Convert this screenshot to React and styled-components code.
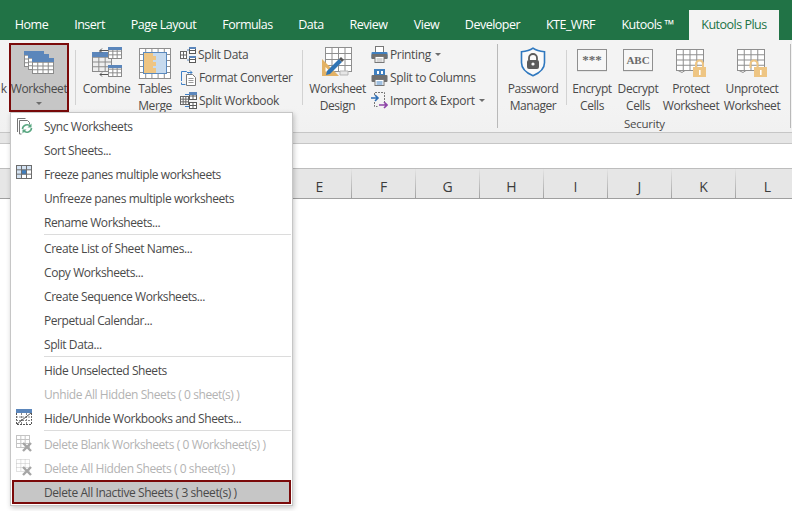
import React from "react";
import styled, { createGlobalStyle } from "styled-components";

const FONT = `"Open Sans", "Noto Sans", "Liberation Sans", sans-serif`;
const TEXT = "#4a4a4a";
const BLUE = "#5b86bb";
const LINE = "#8b8b8b";
const ORANGE = "#eec583";

const Global = createGlobalStyle`
  html, body { margin: 0; padding: 0; background: #fff; overflow: hidden; }
  #root { width: 792px; height: 511px; }
`;

const Page = styled.div`
  position: relative;
  width: 792px;
  height: 511px;
  overflow: hidden;
  background: #fff;
  font-family: ${FONT};
  color: ${TEXT};
`;

const TabBar = styled.div`
  display: flex;
  align-items: flex-end;
  height: 40px;
  background: #217346;
`;

const Tab = styled.div`
  width: ${(p) => p.$w}px;
  height: 30px;
  margin-left: ${(p) => (p.$active ? 4 : 0)}px;
  display: flex;
  align-items: center;
  justify-content: center;
  font-size: 12.5px;
  letter-spacing: -0.5px;
  white-space: nowrap;
  padding-bottom: 1px;
  box-sizing: border-box;
  color: ${(p) => (p.$active ? "#217346" : "#fff")};
  background: ${(p) => (p.$active ? "#f3f3f3" : "transparent")};
`;

const Ribbon = styled.div`
  display: flex;
  align-items: flex-start;
  height: 92px;
  overflow: hidden;
  background: linear-gradient(#f3f3f3 70%, #f1f1f1);
`;

const Clipped = styled.div`
  width: 9px;
  flex: none;
  height: 69px;
  margin-top: 3px;
  display: flex;
  justify-content: flex-end;
  padding-top: 38px;
  padding-right: 2px;
  box-sizing: border-box;
  font-size: 12px;
  line-height: 16.5px;
  white-space: nowrap;
`;

const Large = styled.div`
  flex: none;
  width: ${(p) => p.$w}px;
  height: 69px;
  margin-top: 3px;
  margin-left: ${(p) => p.$ml || 0}px;
  display: flex;
  flex-direction: column;
  align-items: center;
  box-sizing: border-box;
  position: relative;
  background: ${(p) => (p.$on ? "#c6c6c6" : "transparent")};
`;

const Mark = styled.div`
  position: absolute;
  inset: 0;
  border: 2px solid #7b0a0a;
`;

const IconSlot = styled.div`
  height: 38px;
  width: 100%;
  flex: none;
  display: flex;
  align-items: flex-start;
  justify-content: center;
  padding-top: ${(p) => p.$top || 3}px;
  box-sizing: border-box;
`;

const Label = styled.div`
  font-size: 12px;
  line-height: 16.5px;
  letter-spacing: -0.42px;
  text-align: center;
  white-space: nowrap;
`;

const Caret = styled.span`
  display: inline-block;
  width: 0;
  height: 0;
  border-left: 3px solid transparent;
  border-right: 3px solid transparent;
  border-top: 3px solid #6d6d6d;
`;

const CaretRow = styled.div`
  display: flex;
  justify-content: center;
  margin-top: 4px;
`;

const Sep = styled.div`
  flex: none;
  width: 1px;
  height: ${(p) => (p.$strong ? 84 : 55)}px;
  margin-top: ${(p) => (p.$strong ? 4 : 10)}px;
  margin-left: ${(p) => p.$ml || 0}px;
  background: ${(p) => (p.$strong ? "#b9b9b9" : "#d2d2d2")};
`;

const Stack = styled.div`
  flex: none;
  width: ${(p) => p.$w}px;
  margin-top: 3px;
  margin-left: ${(p) => p.$ml || 0}px;
  display: flex;
  flex-direction: column;
`;

const Small = styled.div`
  height: 23px;
  display: flex;
  align-items: center;
  gap: 2px;
  font-size: 12px;
  letter-spacing: -0.35px;
  white-space: nowrap;
  ${Caret} { margin-left: 2px; }
`;

const Group = styled.div`
  flex: none;
  margin-left: 2px;
  width: 214px;
`;

const GroupRow = styled.div`
  display: flex;
`;

const Caption = styled.div`
  font-size: 11.5px;
  line-height: 16px;
  letter-spacing: -0.25px;
  padding-left: 55px;
  margin-top: 4px;
`;

const Band = styled.div`
  height: 10px;
  background: #e6e6e6;
  border-top: 1px solid #c6c6c6;
  border-bottom: 1px solid #c6c6c6;
`;

const FormulaBar = styled.div`
  height: 24px;
  background: #fff;
`;

const Headers = styled.div`
  display: flex;
  height: 29px;
  background: #e6e6e6;
  border-top: 1px solid #bdbdbd;
  border-bottom: 1px solid #9f9f9f;
  overflow: hidden;
`;

const Corner = styled.div`
  flex: none;
  width: 288px;
`;

const Col = styled.div`
  flex: none;
  width: 64px;
  box-sizing: border-box;
  display: flex;
  align-items: flex-end;
  justify-content: center;
  padding-bottom: 1px;
  font-size: 14px;
  line-height: 20px;
  color: #3c3c3c;
  border-right: 1px solid;
  border-image: linear-gradient(#e6e6e6, #a0a0a0) 1;
`;

const Menu = styled.div`
  position: absolute;
  left: 10px;
  top: 112px;
  width: 283px;
  box-sizing: border-box;
  padding: 1px;
  background: #fff;
  border: 1px solid #c6c6c6;
  box-shadow: 1px 2px 5px rgba(0, 0, 0, 0.22);
`;

const Item = styled.div`
  height: 24px;
  display: flex;
  align-items: center;
  box-sizing: border-box;
  font-size: 12px;
  letter-spacing: -0.42px;
  white-space: nowrap;
  color: ${(p) => (p.$off ? "#b3b3b3" : TEXT)};
  background: ${(p) => (p.$picked ? "#c6c6c6" : "transparent")};
  border: ${(p) => (p.$picked ? "2px solid #7b0a0a" : "none")};
  padding-left: ${(p) => (p.$picked ? 30 : 32)}px;
  position: relative;
`;

const ItemIcon = styled.span`
  position: absolute;
  left: 4px;
  top: 3px;
  width: 18px;
  height: 18px;
  display: flex;
`;

const Divider = styled.div`
  height: 2px;
  margin-left: 32px;
  background: linear-gradient(#dcdcdc 50%, #fff 50%);
`;

// a little table: the shape nearly every Kutools icon is built from
const Grid = ({ x, y, w, h, cols = 3, rows = 3, head, fill = "#fff", line = LINE, dash, headH = 3 }) => {
  const parts = [];
  for (let i = 1; i < cols; i++) {
    const px = x + (w * i) / cols;
    parts.push(<line key={"c" + i} x1={px} y1={y} x2={px} y2={y + h} />);
  }
  for (let i = 1; i < rows; i++) {
    const py = y + (h * i) / rows;
    parts.push(<line key={"r" + i} x1={x} y1={py} x2={x + w} y2={py} />);
  }
  return (
    <g stroke={line} strokeWidth="1" strokeDasharray={dash} fill="none">
      <rect x={x} y={y} width={w} height={h} fill={fill} />
      {parts}
      {head && <rect x={x} y={y} width={w} height={headH} fill={head} stroke={head} />}
    </g>
  );
};

const Lock = ({ x, y, open }) => (
  <g>
    <path
      d={open ? `M${x + 1.5} ${y + 8}v-4a3.5 3.5 0 0 1 7 0v4` : `M${x + 3} ${y + 8}v-4a3.5 3.5 0 0 1 7 0v4`}
      fill="none"
      stroke={ORANGE}
      strokeWidth="2"
    />
    <rect x={open ? x + 5 : x} y={y + 7} width="13" height="10" fill={ORANGE} />
    <rect x={(open ? x + 5 : x) + 6} y={y + 10} width="1.6" height="5" fill="#fff" />
  </g>
);

const WorksheetIcon = () => (
  <svg width="30" height="24" viewBox="0 0 30 24">
    <Grid x={0.5} y={0.5} w={19} h={15} cols={4} rows={4} head={BLUE} />
    <Grid x={4.5} y={3.5} w={20} h={15} cols={4} rows={4} head={BLUE} />
    <Grid x={8.5} y={7.5} w={21} h={15} cols={4} rows={4} head={BLUE} />
  </svg>
);

const CombineIcon = () => (
  <svg width="30" height="31" viewBox="0 0 30 31">
    <Grid x={0.5} y={5.5} w={19} h={19} cols={3} rows={4} head={BLUE} headH={4} fill="#eeeeee" />
    <Grid x={16.5} y={0.5} w={13} h={11} cols={3} rows={3} head={BLUE} headH={2} />
    <Grid x={16.5} y={18.5} w={13} h={11} cols={3} rows={3} head={BLUE} headH={2} />
    <path d="M16 3.5H8M8 3.5v2M10 1.5l-2 2 2 2M16 27.5H8M10 25.5l-2 2 2 2" stroke="#555" fill="none" />
  </svg>
);

const MergeIcon = () => (
  <svg width="32" height="32" viewBox="0 0 32 32">
    <Grid x={0.5} y={0.5} w={31} h={30} cols={5} rows={5} line="#8f8f8f" />
    <rect x="4.5" y="4.5" width="23" height="21" fill="#c6daee" stroke="#5a8abf" />
    <path d="M5 5h9v3h3v4h-3v2h3v4h-3v2h3v5H5z" fill={ORANGE} />
  </svg>
);

const SplitDataIcon = () => (
  <svg width="16" height="16" viewBox="0 0 16 16">
    <Grid x={0.5} y={4.5} w={6} h={7} cols={2} rows={2} line="#666" />
    <Grid x={9.5} y={0.5} w={6} h={6} cols={1} rows={2} line="#5a5a5a" head={BLUE} headH={1} />
    <Grid x={9.5} y={9.5} w={6} h={6} cols={1} rows={2} line="#5a5a5a" head={BLUE} headH={1} />
    <path d="M7 3h2M7 13h2" stroke={BLUE} />
  </svg>
);

const ConverterIcon = () => (
  <svg width="17" height="17" viewBox="0 0 17 17">
    <path d="M1.5 12V2.5h5l2 2M1.5 13.5v2h4" fill="none" stroke="#3f80c6" />
    <path d="M6.5 5.5h6l3 3v8h-9z" fill="#fff" stroke="#7a7a7a" />
    <path d="M8.5 9.5h5M8.5 11.5h5M8.5 13.5h5" stroke="#9a9a9a" />
    <path d="M10 1.5l2 2-2 2M7 3.5h5" fill="none" stroke="#3f80c6" />
  </svg>
);

const SplitBookIcon = () => (
  <svg width="17" height="17" viewBox="0 0 17 17">
    <Grid x={0.5} y={4.5} w={8} h={8} cols={3} rows={3} line="#666" />
    <Grid x={9.5} y={0.5} w={7} h={7} cols={2} rows={2} line="#5a5a5a" head={BLUE} headH={2} />
    <Grid x={9.5} y={10.5} w={7} h={6} cols={2} rows={2} line="#5a5a5a" />
    <path d="M5 2.5h4M5 14.5h4" stroke="#3f80c6" />
  </svg>
);

const DesignIcon = () => (
  <svg width="31" height="31" viewBox="0 0 31 31">
    <Grid x={3.5} y={0.5} w={26} h={24} cols={4} rows={4} line="#8f8f8f" />
    <path d="M18 24h8v4h-8z" fill="#e6e6e6" stroke="#b5b5b5" />
    <path d="M0 12l17 17H0z" fill="#e3b265" />
    <path d="M3.5 20l4.5 4.5H3.5z" fill="#fff" />
    <path d="M5 24L17 12l3 3L8 27l-4 1z" fill="#2f74b5" />
    <path d="M17 12l2-2 3 3-2 2z" fill="#555" />
  </svg>
);

const PrintIcon = ({ alt }) => (
  <svg width="17" height="17" viewBox="0 0 17 17">
    <rect x={alt ? 3.5 : 4.5} y="0.5" width={alt ? 10 : 8} height="6" fill={alt ? "#3f7fbf" : "#fff"} stroke={alt ? "#3f7fbf" : "#777"} />
    {alt && <path d="M6 2h2v3H6zM10 2h2v3h-2z" fill="#fff" />}
    <rect x="0.5" y="6" width="16" height="7" rx="1" fill={alt ? "#6f6f6f" : "#3f7fbf"} />
    {!alt && <rect x="0.5" y="8" width="16" height="5" rx="1" fill="#6f6f6f" />}
    <rect x="4" y="10.5" width="9" height="6" fill="#fff" stroke="#777" />
    <path d="M5.5 13h6M5.5 15h6" stroke={alt ? "#3f7fbf" : "#aaa"} />
  </svg>
);

const ImportIcon = () => (
  <svg width="17" height="17" viewBox="0 0 17 17">
    <path d="M3.5 3V.5h10v12" fill="none" stroke="#777" strokeDasharray="2 1" />
    <path d="M0 6h6.5M4 3l3 3-3 3" fill="none" stroke="#2f6fb5" strokeWidth="1.6" />
    <path d="M8 13h8M13 10l3 3-3 3" fill="none" stroke="#8e44a8" strokeWidth="1.6" />
    <path d="M3.5 10v4.500h3" fill="none" stroke="#777" strokeDasharray="2 1" />
  </svg>
);

const ShieldIcon = () => (
  <svg width="26" height="30" viewBox="0 0 26 30">
    <path
      d="M13 1.200c3 2.300 7 3.300 11.500 3.500v11c0 6-4.500 10-11.500 13C6 25.700 1.500 21.700 1.500 15.700v-11C6 4.500 10 3.500 13 1.200z"
      fill="#fafafa"
      stroke="#2f78bf"
      strokeWidth="1.6"
    />
    <path d="M9 13.500V11a4 4 0 0 1 8 0v2.500" fill="none" stroke="#5b5b5b" strokeWidth="1.800" />
    <rect x="7" y="13" width="12" height="9" rx="2" fill="#5b5b5b" />
    <circle cx="13" cy="17" r="1.600" fill="#fafafa" />
  </svg>
);

const CodeBox = styled.div`
  width: 30px;
  height: 22px;
  box-sizing: border-box;
  border: 1px solid #8f8f8f;
  background: #f7f7f7;
  box-shadow: 0 1px 0 #e4e4e4;
  display: flex;
  align-items: center;
  justify-content: center;
  font-family: "Liberation Serif", serif;
  font-weight: 700;
  font-size: ${(p) => p.$size}px;
  color: #6a6a6a;
`;

const SheetLockIcon = ({ open }) => (
  <svg width={open ? 31 : 30} height="29" viewBox={`0 0 ${open ? 31 : 30} 29`}>
    <Grid x={0.5} y={0.5} w={27} h={21} cols={4} rows={4} line="#8f8f8f" />
    <path d="M2 21.500l4 2 3-2" fill="none" stroke="#8f8f8f" />
    <Lock x={open ? 12 : 17} y={11} open={open} />
  </svg>
);

const SyncIcon = () => (
  <svg width="18" height="18" viewBox="0 0 18 18">
    <path d="M1.500 15V1.500h8" fill="none" stroke="#777" />
    <path d="M3.500 17V3.500h8l2 2v2M3.500 17h2" fill="none" stroke="#777" />
    <path d="M6.500 12a4.500 4.500 0 0 1 8-2.500M15.500 11a4.500 4.500 0 0 1-8 2.500" fill="none" stroke="#5aa782" strokeWidth="1.600" />
    <path d="M15.500 6.500v4h-4zM6.500 16.500v-4h4z" fill="#5aa782" />
  </svg>
);

const FreezeIcon = () => (
  <svg width="16" height="15" viewBox="0 0 16 15">
    <path d="M1 1h14v4H10.500v4.500H5.500V14H1z" fill="#d4e3f3" />
    <rect x="5.500" y="4.800" width="5" height="4.500" fill="#3f7fbf" />
    <Grid x={0.5} y={0.5} w={15} h={13} cols={3} rows={3} line="#6d6d6d" fill="none" />
  </svg>
);

const HideIcon = () => (
  <svg width="16" height="16" viewBox="0 0 16 16">
    <rect x="0" y="0" width="16" height="4" fill={BLUE} />
    <path d="M.5 4v11.500h15V4" fill="none" stroke="#555" strokeDasharray="2 1" />
    <path d="M0 8h16M0 11.500h16M5.500 4v11M10.500 4v11" stroke="#888" strokeDasharray="2 1" />
    <path d="M1 15L15 4" stroke="#555" />
  </svg>
);

const BinIcon = ({ dotted }) => (
  <svg width="17" height="17" viewBox="0 0 17 17">
    <Grid x={0.5} y={0.5} w={13} h={12} cols={3} rows={3} line="#c4c4c4" dash={dotted ? "1 1" : undefined} />
    <path d="M7 8l8 8M15 8l-8 8" stroke="#a5a5a5" strokeWidth="2.400" />
  </svg>
);

const Icon = ({ top, children }) => <IconSlot $top={top}>{children}</IconSlot>;

const COLS = "EFGHIJKL".split("");

const MENU = [
  [
    { text: "Sync Worksheets", icon: <SyncIcon /> },
    { text: "Sort Sheets..." },
    { text: "Freeze panes multiple worksheets", icon: <FreezeIcon /> },
    { text: "Unfreeze panes multiple worksheets" },
    { text: "Rename Worksheets..." },
  ],
  [
    { text: "Create List of Sheet Names..." },
    { text: "Copy Worksheets..." },
    { text: "Create Sequence Worksheets..." },
    { text: "Perpetual Calendar..." },
    { text: "Split Data..." },
  ],
  [
    { text: "Hide Unselected Sheets" },
    { text: "Unhide All Hidden Sheets ( 0 sheet(s) )", off: true },
    { text: "Hide/Unhide Workbooks and Sheets...", icon: <HideIcon /> },
  ],
  [
    { text: "Delete Blank Worksheets ( 0 Worksheet(s) )", off: true, icon: <BinIcon /> },
    { text: "Delete All Hidden Sheets ( 0 sheet(s) )", off: true, icon: <BinIcon dotted /> },
    { text: "Delete All Inactive Sheets ( 3 sheet(s) )", picked: true },
  ],
];

const TABS = [
  ["Home", 63],
  ["Insert", 53],
  ["Page Layout", 95],
  ["Formulas", 73],
  ["Data", 54],
  ["Review", 61],
  ["View", 55],
  ["Developer", 77],
  ["KTE_WRF", 79],
  ["Kutools ™", 75],
];

export default function App() {
  return (
    <Page>
      <Global />
      <TabBar>
        {TABS.map(([name, w]) => (
          <Tab key={name} $w={w}>
            {name}
          </Tab>
        ))}
        <Tab $w={90} $active>
          Kutools Plus
        </Tab>
      </TabBar>

      <Ribbon>
        <Clipped>k</Clipped>
        <Large $w={60} $on>
          <Mark />
          <Icon top={8}>
            <WorksheetIcon />
          </Icon>
          <Label>Worksheet</Label>
          <CaretRow>
            <Caret />
          </CaretRow>
        </Large>
        <Sep $ml={6} />
        <Large $w={53} $ml={4}>
          <Icon top={4}>
            <CombineIcon />
          </Icon>
          <Label>Combine</Label>
        </Large>
        <Large $w={44}>
          <Icon top={5}>
            <MergeIcon />
          </Icon>
          <Label>
            Tables
            <br />
            Merge
          </Label>
        </Large>
        <Stack $w={122} $ml={3}>
          <Small>
            <SplitDataIcon />
            Split Data
          </Small>
          <Small>
            <ConverterIcon />
            Format Converter
          </Small>
          <Small>
            <SplitBookIcon />
            Split Workbook
          </Small>
        </Stack>
        <Sep />
        <Large $w={63} $ml={3}>
          <Icon top={4}>
            <DesignIcon />
          </Icon>
          <Label>
            Worksheet
            <br />
            Design
          </Label>
        </Large>
        <Stack $w={126} $ml={2}>
          <Small>
            <PrintIcon />
            Printing
            <Caret />
          </Small>
          <Small>
            <PrintIcon alt />
            Split to Columns
          </Small>
          <Small>
            <ImportIcon />
            Import &amp; Export
            <Caret />
          </Small>
        </Stack>
        <Sep $strong />
        <Large $w={60} $ml={5}>
          <Icon top={4}>
            <ShieldIcon />
          </Icon>
          <Label>
            Password
            <br />
            Manager
          </Label>
        </Large>
        <Sep $ml={3} />
        <Group>
          <GroupRow>
            <Large $w={46}>
              <Icon top={6}>
                <CodeBox $size={13}>***</CodeBox>
              </Icon>
              <Label>
                Encrypt
                <br />
                Cells
              </Label>
            </Large>
            <Large $w={46}>
              <Icon top={6}>
                <CodeBox $size={11}>ABC</CodeBox>
              </Icon>
              <Label>
                Decrypt
                <br />
                Cells
              </Label>
            </Large>
            <Large $w={60}>
              <Icon top={6}>
                <SheetLockIcon />
              </Icon>
              <Label>
                Protect
                <br />
                Worksheet
              </Label>
            </Large>
            <Large $w={62}>
              <Icon top={6}>
                <SheetLockIcon open />
              </Icon>
              <Label>
                Unprotect
                <br />
                Worksheet
              </Label>
            </Large>
          </GroupRow>
          <Caption>Security</Caption>
        </Group>
        <Sep $strong $ml={7} />
      </Ribbon>

      <Band />
      <FormulaBar />
      <Headers>
        <Corner />
        {COLS.map((c) => (
          <Col key={c}>{c}</Col>
        ))}
      </Headers>

      <Menu>
        {MENU.map((section, i) => (
          <React.Fragment key={i}>
            {i > 0 && <Divider />}
            {section.map((it) => (
              <Item key={it.text} $off={it.off} $picked={it.picked}>
                {it.icon && <ItemIcon>{it.icon}</ItemIcon>}
                {it.text}
              </Item>
            ))}
          </React.Fragment>
        ))}
      </Menu>
    </Page>
  );
}
